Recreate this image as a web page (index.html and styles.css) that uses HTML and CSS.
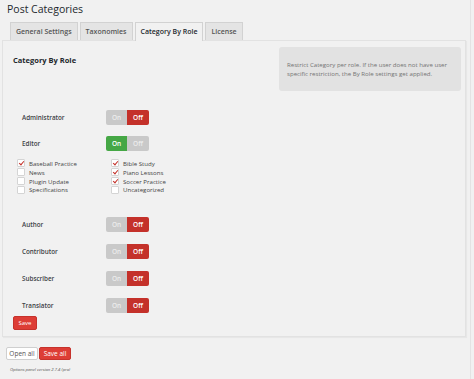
FILE: index.html
```html
<!DOCTYPE html>
<html lang="en">

<head>
    <meta charset="UTF-8">
    <title>Post Categories</title>
    <link rel="stylesheet" href="styles.css">
</head>

<body>
    <div class="wrap">
        <h1 class="page-title">Post Categories</h1>
        <nav class="tabs">
            <a class="tab">General Settings</a>
            <a class="tab">Taxonomies</a>
            <a class="tab active">Category By Role</a>
            <a class="tab">License</a>
        </nav>

        <div class="panel">
            <div class="panel-head">
                <h3>Category By Role</h3>
                <div class="desc">Restrict Category per role. If the user does not have user specific restriction, the By Role settings get applied.</div>
            </div>

            <div class="roles">
                <div class="role">
                    <span class="role-name">Administrator</span>
                    <span class="switch"><span class="sw-on">On</span><span class="sw-off active">Off</span></span>
                </div>
                <div class="role">
                    <span class="role-name">Editor</span>
                    <span class="switch"><span class="sw-on active">On</span><span class="sw-off">Off</span></span>
                </div>

                <div class="cats">
                    <label class="cat"><span class="box checked"></span>Baseball Practice</label>
                    <label class="cat"><span class="box checked"></span>Bible Study</label>
                    <label class="cat"><span class="box"></span>News</label>
                    <label class="cat"><span class="box checked"></span>Piano Lessons</label>
                    <label class="cat"><span class="box"></span>Plugin Update</label>
                    <label class="cat"><span class="box checked"></span>Soccer Practice</label>
                    <label class="cat"><span class="box"></span>Specifications</label>
                    <label class="cat"><span class="box"></span>Uncategorized</label>
                </div>

                <div class="role spaced">
                    <span class="role-name">Author</span>
                    <span class="switch"><span class="sw-on">On</span><span class="sw-off active">Off</span></span>
                </div>
                <div class="role">
                    <span class="role-name">Contributor</span>
                    <span class="switch"><span class="sw-on">On</span><span class="sw-off active">Off</span></span>
                </div>
                <div class="role">
                    <span class="role-name">Subscriber</span>
                    <span class="switch"><span class="sw-on">On</span><span class="sw-off active">Off</span></span>
                </div>
                <div class="role">
                    <span class="role-name">Translator</span>
                    <span class="switch"><span class="sw-on">On</span><span class="sw-off active">Off</span></span>
                </div>
            </div>

            <button class="btn red save">Save</button>
        </div>

        <div class="actions">
            <button class="btn">Open all</button>
            <button class="btn red">Save all</button>
        </div>
        <p class="version">Options panel version 2.7.4 (pro)</p>
    </div>
</body>

</html>
```

FILE: styles.css
```css
body {
    margin: 0;
    background: #f1f1f1;
    font-family: "Open Sans", "Liberation Sans", sans-serif;
    color: #23282d;
}

.wrap {
    width: 471px;
    height: 379px;
    box-sizing: border-box;
    padding: 2px 0 0 2px;
    border-right: 1px solid #e3e3e3;
}

.page-title {
    margin: 0 0 6px 5px;
    font-size: 10.5px;
    line-height: 14px;
    font-weight: 400;
}

/* tabs */
.tabs {
    display: flex;
    gap: 2px;
    margin-left: 8px;
}

.tab {
    height: 18px;
    box-sizing: border-box;
    padding: 0 5px;
    border: 1px solid #d2d2d2;
    border-bottom: none;
    background: #e4e4e4;
    color: #555;
    font-size: 7px;
    font-weight: 600;
    line-height: 17px;
}

.tab.active {
    background: #f1f1f1;
    color: #23282d;
    height: 19px;
    margin-bottom: -1px;
    position: relative;
}

/* panel */
.panel {
    width: 464px;
    box-sizing: border-box;
    padding: 6px 4px 6px 10px;
    border: 1px solid #e2e2e2;
    box-shadow: 1px 1px 1px rgba(0, 0, 0, .04);
}

.panel-head {
    display: flex;
    justify-content: space-between;
    align-items: flex-start;
}

.panel-head h3 {
    margin: 8px 0 0;
    font-size: 7.5px;
    line-height: 10px;
    font-weight: 700;
}

.desc {
    width: 182px;
    box-sizing: border-box;
    padding: 13px 7px 13px 8px;
    background: #e2e2e2;
    border-radius: 3px;
    color: #737373;
    font-size: 6.1px;
    line-height: 9px;
}

/* roles */
.roles {
    margin-top: 19px;
}

.role {
    display: flex;
    align-items: center;
    height: 15px;
    margin-top: 11px;
}

.role:first-child {
    margin-top: 0;
}

.role.spaced {
    margin-top: 23px;
}

.role.spaced ~ .role {
    margin-top: 12px;
}

.role-name {
    width: 84px;
    margin-left: 9px;
    font-size: 6.3px;
    font-weight: 600;
    color: #3c4146;
}

.switch {
    display: flex;
    border-radius: 2px;
    overflow: hidden;
    font-size: 6.5px;
    font-weight: 600;
    line-height: 15px;
    text-align: center;
}

.switch span {
    background: #c9c9c9;
    color: #ececec;
}

.sw-on {
    width: 21px;
}

.sw-off {
    width: 22px;
}

.sw-on.active {
    background: #45a745;
    color: #fff;
}

.sw-off.active {
    background: #c4312a;
    color: #fff;
}

/* categories */
.cats {
    display: grid;
    grid-template-columns: 94px 94px;
    grid-auto-rows: 8.8px;
    margin: 8px 0 0 4px;
}

.cat {
    display: flex;
    align-items: center;
    font-size: 6.1px;
    color: #444;
}

.box {
    width: 8px;
    height: 8px;
    box-sizing: border-box;
    margin-right: 4px;
    border: 1px solid #d4d4d4;
    background: #fff;
    border-radius: 1px;
    position: relative;
}

.box.checked::after {
    content: "";
    position: absolute;
    left: 1.5px;
    top: 0;
    width: 2px;
    height: 4px;
    border: solid #c4312a;
    border-width: 0 1.3px 1.3px 0;
    transform: rotate(40deg);
}

/* buttons */
.btn {
    height: 13px;
    padding: 0 4px;
    border: 1px solid #cfcfcf;
    border-radius: 2px;
    background: #fff;
    color: #555;
    font-family: inherit;
    font-size: 6.5px;
    line-height: 11px;
}

.btn.red {
    background: #dd3d36;
    border-color: #c6322c;
    color: #fff;
}

.save {
    display: block;
    height: 14px;
    width: 24px;
    padding: 0;
    margin: 3px 0 0;
    font-size: 6px;
}

.actions {
    display: flex;
    gap: 1px;
    margin: 10px 0 0 4px;
}

.actions .btn {
    width: 32px;
    padding: 0;
}

.version {
    margin: 7px 0 0 8px;
    font-size: 4.2px;
    line-height: 6px;
    font-style: italic;
    color: #555;
}
```
